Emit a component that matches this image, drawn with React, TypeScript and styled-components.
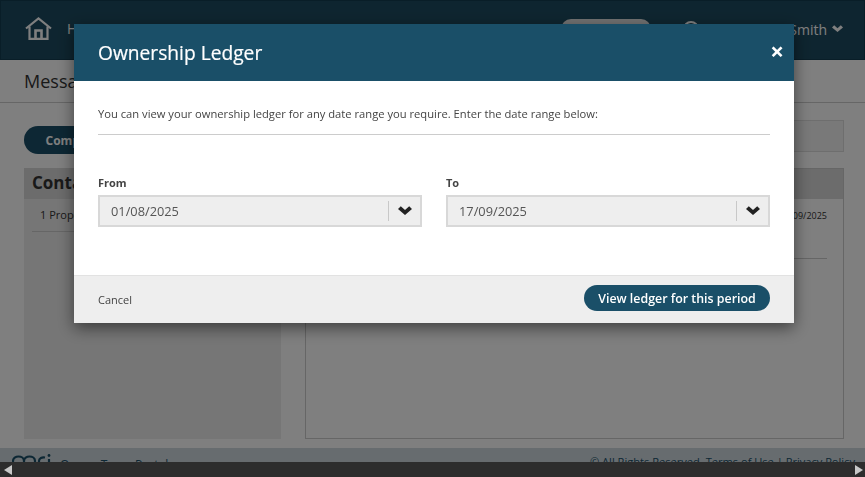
import React, { FC } from "react";
import styled, { createGlobalStyle } from "styled-components";

const GlobalStyle = createGlobalStyle`
    html, body {
        margin: 0;
        padding: 0;
        height: 100%;
        overflow: hidden;
    }

    body {
        background: #fff;
        color: #333;
        font-family: "Open Sans", "Liberation Sans", sans-serif;
    }

    * {
        box-sizing: border-box;
    }
`;

const HomeIcon: FC = () => (
    <svg width="27" height="23" viewBox="0 0 27 23" fill="none" stroke="#fff" strokeWidth="2.2">
        <path d="M1 11.5 13.5 1.5 26 11.5" />
        <path d="M4.5 9.5V21.8H22.5V9.5" />
        <path d="M10.5 21.5V13.5H16.5V21.5" strokeWidth="2.6" />
    </svg>
);

const ChevronIcon: FC<{ size?: number; color?: string }> = ({ size = 14, color = "#222" }) => (
    <svg width={size} height={size * 0.65} viewBox="0 0 14 9" fill={color}>
        <path d="M0 3 2.8.2 7 4 11.2.2 14 3 7 9z" />
    </svg>
);

const MriLogo: FC = () => (
    <svg width="40" height="16" viewBox="0 0 40 16" fill="none" stroke="#1a4f68" strokeWidth="2.2">
        <path d="M1 16V7c0-6 11-6 11 0v9M12 7c0-6 11-6 11 0v9" />
        <path d="M27 16V7c0-3 3-4 6-3.500" />
        <path d="M37 16V5" />
        <circle cx="37" cy="1.500" r="1.400" fill="#1a4f68" stroke="none" />
    </svg>
);

const App: FC = () => (
    <>
        <GlobalStyle />
        <Page>
            <TopBar>
                <HomeLink>
                    <HomeIcon />
                    <span>Home</span>
                </HomeLink>
                <TopActions>
                    <TopPill />
                    <Avatar />
                    <UserName>
                        Jane Smith
                        <ChevronIcon size={11} color="#fff" />
                    </UserName>
                </TopActions>
            </TopBar>
            <TitleBar>Messages</TitleBar>
            <Content>
                <Toolbar>
                    <ComposeButton>Compose</ComposeButton>
                    <SearchBox />
                </Toolbar>
                <Panels>
                    <ContactsPanel>
                        <ContactsHeading>Contacts</ContactsHeading>
                        <ContactRow>1 Property</ContactRow>
                    </ContactsPanel>
                    <MessagesPanel>
                        <MessagesHeading />
                        <MessageRow>
                            <MessageDate>17/09/2025</MessageDate>
                        </MessageRow>
                    </MessagesPanel>
                </Panels>
            </Content>
            <PageFooter>
                <FooterBrand>
                    <MriLogo />
                    <FooterBrandText>Owner Team Portal</FooterBrandText>
                </FooterBrand>
                <span>© All Rights Reserved. Terms of Use | Privacy Policy</span>
            </PageFooter>
            <Scrollbar>
                <ScrollArrow $direction="left" />
                <ScrollArrow $direction="right" />
            </Scrollbar>
        </Page>
        <Overlay>
            <Modal>
                <ModalHeader>
                    <ModalTitle>Ownership Ledger</ModalTitle>
                    <CloseButton aria-label="Close">×</CloseButton>
                </ModalHeader>
                <ModalBody>
                    <Intro>You can view your ownership ledger for any date range you require. Enter the date range below:</Intro>
                    <Fields>
                        <Field>
                            <FieldLabel>From</FieldLabel>
                            <DateSelect>
                                <DateValue>01/08/2025</DateValue>
                                <DateToggle><ChevronIcon /></DateToggle>
                            </DateSelect>
                        </Field>
                        <Field>
                            <FieldLabel>To</FieldLabel>
                            <DateSelect>
                                <DateValue>17/09/2025</DateValue>
                                <DateToggle><ChevronIcon /></DateToggle>
                            </DateSelect>
                        </Field>
                    </Fields>
                </ModalBody>
                <ModalFooter>
                    <CancelLink>Cancel</CancelLink>
                    <PrimaryButton>View ledger for this period</PrimaryButton>
                </ModalFooter>
            </Modal>
        </Overlay>
    </>
);

export default App;

const Page = styled.div`
    display: flex;
    flex-direction: column;
    height: 100vh;
    overflow: hidden;
`;

const TopBar = styled.header`
    flex: 0 0 60px;
    display: flex;
    align-items: center;
    justify-content: space-between;
    padding: 0 21px 0 24px;
    background: #1d4b60;
    border: 1px solid #133c50;
`;

const HomeLink = styled.div`
    display: flex;
    align-items: center;
    gap: 15px;
    color: #fff;
    font-size: 14px;
    margin-bottom: 4px;
`;

const TopActions = styled.div`
    display: flex;
    align-items: center;
    margin-bottom: 2px;
`;

const TopPill = styled.div`
    width: 90px;
    height: 20px;
    border-radius: 10px;
    background: #e4e4e4;
    margin-right: 32px;
`;

const Avatar = styled.div`
    width: 16px;
    height: 16px;
    border: 2px solid #fff;
    border-radius: 50%;
    margin-right: 59px;
`;

const UserName = styled.div`
    display: flex;
    align-items: center;
    gap: 5px;
    color: #fff;
    font-size: 14px;
`;

const TitleBar = styled.div`
    flex: 0 0 43px;
    display: flex;
    align-items: center;
    padding-left: 24px;
    font-size: 18px;
    color: #333;
    border-bottom: 1px solid #ccc;
`;

const Content = styled.main`
    flex: 1;
    display: flex;
    flex-direction: column;
    min-height: 0;
    padding: 17px 21px 9px 24px;
    gap: 14px;
`;

const Toolbar = styled.div`
    display: flex;
    align-items: flex-start;
    justify-content: space-between;
`;

const ComposeButton = styled.button`
    width: 98px;
    height: 28px;
    margin-top: 6px;
    padding: 0;
    border: none;
    border-radius: 14px;
    background: #1a4f68;
    color: #fff;
    font: 700 12px "Open Sans", sans-serif;
`;

const SearchBox = styled.div`
    width: 300px;
    height: 32px;
    background: #f2f2f2;
    border: 1px solid #ddd;
`;

const Panels = styled.div`
    flex: 1;
    display: grid;
    grid-template-columns: 257px 539px;
    column-gap: 24px;
    min-height: 0;
`;

const ContactsPanel = styled.section`
    background: #ececec;
`;

const ContactsHeading = styled.h2`
    margin: 0;
    height: 31px;
    padding-left: 8px;
    background: #d8d8d8;
    font-size: 17px;
    font-weight: 700;
    line-height: 29px;
`;

const ContactRow = styled.div`
    margin: 0 8px;
    height: 33px;
    padding-left: 8px;
    border-bottom: 1px solid #ccc;
    font-size: 11px;
    line-height: 31px;
`;

const MessagesPanel = styled.section`
    border: 1px solid #ccc;
`;

const MessagesHeading = styled.div`
    height: 30px;
    background: #d8d8d8;
`;

const MessageRow = styled.div`
    display: flex;
    justify-content: flex-end;
    height: 60px;
    margin-right: 16px;
    padding-top: 10px;
    border-bottom: 1px solid #ccc;
`;

const MessageDate = styled.span`
    font-size: 9px;
`;

const PageFooter = styled.footer`
    flex: 0 0 14px;
    display: flex;
    justify-content: space-between;
    overflow: hidden;
    padding: 6px 10px 0 12px;
    background: #ced8de;
    color: #1a4f68;
    font-size: 11.1px;
    line-height: 15px;
`;

const FooterBrand = styled.div`
    display: flex;
    gap: 8px;
    align-items: flex-start;
`;

const FooterBrandText = styled.span`
    margin-top: 3px;
    font-size: 12px;
`;

const Scrollbar = styled.div`
    position: relative;
    z-index: 20;
    flex: 0 0 15px;
    display: flex;
    align-items: center;
    justify-content: space-between;
    padding: 0 2px 0 4px;
    background: #2d2d2d;
`;

const ScrollArrow = styled.span<{ $direction: "left" | "right" }>`
    width: 0;
    height: 0;
    border-top: 5px solid transparent;
    border-bottom: 5px solid transparent;
    ${p => p.$direction === "left"
        ? "border-right: 8px solid #c8c8c8;"
        : "border-left: 8px solid #c8c8c8;"}
`;

const Overlay = styled.div`
    position: fixed;
    top: 0;
    left: 0;
    right: 0;
    bottom: 15px;
    z-index: 10;
    padding: 24px 0 0 74px;
    background: rgba(0, 0, 0, 0.5);
`;

const Modal = styled.div`
    width: 720px;
    background: #fff;
    box-shadow: 0 5px 15px rgba(0, 0, 0, 0.5);
`;

const ModalHeader = styled.div`
    height: 57px;
    display: flex;
    align-items: center;
    justify-content: space-between;
    padding: 0 9px 0 24px;
    background: #1a4f68;
`;

const ModalTitle = styled.h1`
    margin: 0;
    color: #fff;
    font-size: 19.2px;
    font-weight: 400;
    -webkit-text-stroke: 0.2px #fff;
`;

const CloseButton = styled.button`
    width: 16px;
    height: 24px;
    padding: 0;
    margin-bottom: 4px;
    border: none;
    background: none;
    color: #fff;
    font: 700 24px/24px "Open Sans", sans-serif;
`;

const ModalBody = styled.div`
    height: 195px;
    padding: 25px 24px 0;
    border-bottom: 1px solid #e2e2e2;
`;

const Intro = styled.p`
    margin: 0;
    height: 29px;
    border-bottom: 1px solid #ccc;
    color: #444;
    font-size: 11.2px;
    line-height: 16px;
`;

const Fields = styled.div`
    display: grid;
    grid-template-columns: 324px 324px;
    column-gap: 24px;
    margin-top: 40px;
`;

const Field = styled.div`
    display: flex;
    flex-direction: column;
    gap: 5px;
`;

const FieldLabel = styled.label`
    color: #444;
    font-size: 11px;
    font-weight: 700;
    line-height: 15px;
`;

const DateSelect = styled.div`
    height: 32px;
    display: flex;
    align-items: center;
    background: #eee;
    border: 2px solid #d8d8d8;
`;

const DateValue = styled.span`
    flex: 1;
    padding-left: 11px;
    color: #555;
    font-size: 12.8px;
`;

const DateToggle = styled.span`
    width: 32px;
    height: 20px;
    display: flex;
    align-items: center;
    justify-content: center;
    border-left: 1px solid #c8c8c8;
`;

const ModalFooter = styled.div`
    height: 47px;
    display: flex;
    align-items: center;
    justify-content: space-between;
    padding: 0 24px;
    background: #eee;
`;

const CancelLink = styled.a`
    color: #444;
    font-size: 11px;
`;

const PrimaryButton = styled.button`
    width: 186px;
    height: 26px;
    margin-bottom: 3px;
    padding: 0;
    border: none;
    border-radius: 13px;
    background: #1a4f68;
    color: #fff;
    font: 600 12.4px "Open Sans", sans-serif;
`;
